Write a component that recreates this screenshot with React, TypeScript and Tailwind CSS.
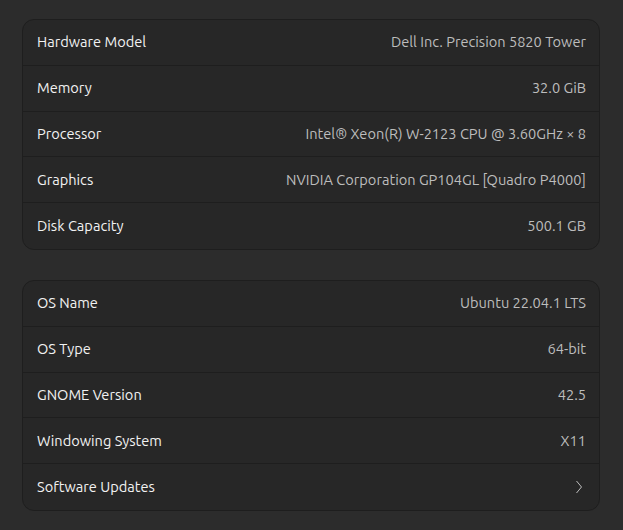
const HARDWARE = [
  ["Hardware Model", "Dell Inc. Precision 5820 Tower"],
  ["Memory", "32.0 GiB"],
  ["Processor", "Intel® Xeon(R) W-2123 CPU @ 3.60GHz × 8"],
  ["Graphics", "NVIDIA Corporation GP104GL [Quadro P4000]"],
  ["Disk Capacity", "500.1 GB"],
];

const SOFTWARE = [
  ["OS Name", "Ubuntu 22.04.1 LTS"],
  ["OS Type", "64-bit"],
  ["GNOME Version", "42.5"],
  ["Windowing System", "X11"],
];

function Row({ label, value, last }: { label: string; value?: string; last?: boolean }) {
  return (
    <div
      className={`flex h-[45.8px] items-center justify-between pl-[14px] pr-[13px] ${
        last ? "" : "border-b border-[#1e1e1e]"
      }`}
    >
      <span className="text-[14.6px] text-[#f2f2f2]">{label}</span>
      {value !== undefined ? (
        <span className="text-[14.6px] text-[#bdbdbd]">{value}</span>
      ) : (
        <svg width="8" height="16" viewBox="0 0 8 16" className="mr-[3px]">
          <path d="M1.5 2 L6.5 8 L1.5 14" fill="none" stroke="#bdbdbd" strokeWidth="1" />
        </svg>
      )}
    </div>
  );
}

export default function App() {
  return (
    <div
      className="min-h-[530px] w-full bg-[#2c2c2c] pl-[22px] pr-[23px] pt-[19px]"
      style={{ fontFamily: "Ubuntu, 'Noto Sans', 'Open Sans', sans-serif" }}
    >
      <div className="overflow-hidden rounded-[12px] border border-[#1e1e1e] bg-[#272727]">
        {HARDWARE.map(([l, v], i) => (
          <Row key={l} label={l} value={v} last={i === HARDWARE.length - 1} />
        ))}
      </div>
      <div className="mt-[30px] overflow-hidden rounded-[12px] border border-[#1e1e1e] bg-[#272727]">
        {SOFTWARE.map(([l, v]) => (
          <Row key={l} label={l} value={v} />
        ))}
        <Row label="Software Updates" last />
      </div>
    </div>
  );
}
